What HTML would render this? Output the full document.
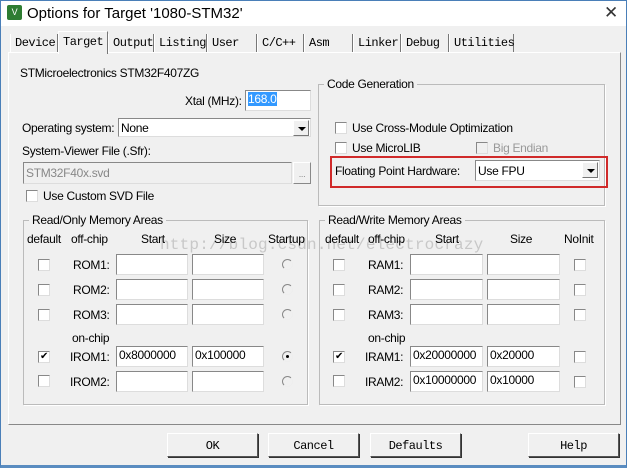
<!DOCTYPE html>
<html><head><meta charset="utf-8"><style>
*{box-sizing:border-box;margin:0;padding:0}
body{width:627px;height:468px;overflow:hidden;background:#f0f0f0;font-family:"Liberation Sans",Arial,sans-serif;font-size:12px;color:#000;position:relative;letter-spacing:-0.3px}
.a{position:absolute;white-space:nowrap}
.win{position:absolute;left:0;top:0;width:627px;height:468px;border:1px solid #4a7fb8;border-bottom:3px solid #5a8cc0}
.title{position:absolute;left:1px;top:1px;width:625px;height:25px;background:#fff}
.mono{font-family:"Liberation Mono",monospace;font-size:12px;letter-spacing:-0.5px}
.tab{position:absolute;top:34px;height:19px;border-left:1px solid #fff;border-right:1px solid #777;padding:2px 0 0 4px}
.panel{position:absolute;left:8px;top:52px;width:613px;height:373px;border:1px solid;border-color:#fff #888 #888 #fff}
.grp{position:absolute;border:1px solid #bbb;box-shadow:1px 1px 0 #fff}
.gl{position:absolute;background:#f0f0f0;padding:0 3px;top:-8px;left:5px}
.inp{position:absolute;background:#fff;border:1px solid;border-color:#888 #ddd #ddd #888;height:21px;padding:1px 2px;font-size:12px}
.cb{position:absolute;width:12px;height:12px;background:#fff;border:1px solid;border-color:#888 #ddd #ddd #888}
.rd{position:absolute;width:11px;height:11px;border-radius:50%;border:1px solid;border-color:#888 #eee #eee #888;background:#f0f0f0}
.btn{position:absolute;top:433px;width:91px;height:24px;border:1px solid;border-color:#fff #555 #555 #fff;box-shadow:1px 1px 0 #333;text-align:center;padding-top:5px}
.dd{position:absolute;width:16px;height:16px;border:1px solid;border-color:#fff #777 #777 #fff;background:#f0f0f0}
.dd:after{content:"";position:absolute;left:4px;top:6px;border:4px solid transparent;border-top:4px solid #000;border-bottom:0}
</style></head><body>
<div class="win"></div>
<div class="title"></div>
<div class="a" style="left:7px;top:5px;width:15px;height:15px;background:#2e7d32;border-radius:2px;color:#fff;font-size:9px;text-align:center;line-height:15px">V</div>
<div class="a" style="left:27px;top:5px;font-size:15px;letter-spacing:0">Options for Target '1080-STM32'</div>
<div class="a" style="left:604px;top:3px;font-size:17px;color:#333">✕</div>

<div class="tab mono" style="left:10px;width:48px">Device</div>
<div class="tab mono" style="left:108px;width:46px">Output</div>
<div class="tab mono" style="left:154px;width:53px">Listing</div>
<div class="tab mono" style="left:207px;width:50px">User</div>
<div class="tab mono" style="left:257px;width:47px">C/C++</div>
<div class="tab mono" style="left:304px;width:49px">Asm</div>
<div class="tab mono" style="left:353px;width:48px">Linker</div>
<div class="tab mono" style="left:401px;width:48px">Debug</div>
<div class="tab mono" style="left:449px;width:65px">Utilities</div>
<div class="panel"></div>
<div class="tab mono" style="left:58px;top:31px;height:23px;width:50px;background:#f0f0f0;padding-top:3px;border-top:1px solid #fff">Target</div>

<div class="a" style="left:20px;top:66px">STMicroelectronics STM32F407ZG</div>
<div class="a" style="left:185px;top:94px">Xtal (MHz):</div>
<div class="inp" style="left:245px;top:90px;width:66px"><span style="background:#3399ff;color:#fff">168.0</span></div>
<div class="a" style="left:22px;top:121px">Operating system:</div>
<div class="inp" style="left:118px;top:118px;width:193px;height:19px;padding-top:2px">None</div>
<div class="dd" style="left:293px;top:120px"></div>
<div class="a" style="left:22px;top:144px">System-Viewer File (.Sfr):</div>
<div class="inp" style="left:23px;top:162px;width:269px;height:22px;background:#f0f0f0;color:#888;padding-top:3px">STM32F40x.svd</div>
<div class="a" style="left:293px;top:162px;width:18px;height:22px;border:1px solid;border-color:#fff #888 #888 #fff;color:#888;font-size:9px;text-align:center;padding-top:6px">...</div>
<div class="cb" style="left:26px;top:190px"></div>
<div class="a" style="left:43px;top:189px">Use Custom SVD File</div>

<div class="grp" style="left:318px;top:84px;width:287px;height:122px"><div class="gl">Code Generation</div></div>
<div class="cb" style="left:335px;top:122px"></div>
<div class="a" style="left:352px;top:121px">Use Cross-Module Optimization</div>
<div class="cb" style="left:335px;top:142px"></div>
<div class="a" style="left:352px;top:141px">Use MicroLIB</div>
<div class="cb" style="left:476px;top:142px;background:#f0f0f0"></div>
<div class="a" style="left:493px;top:141px;color:#999">Big Endian</div>
<div class="a" style="left:330px;top:156px;width:278px;height:32px;border:2px solid #d02a2a"></div>
<div class="a" style="left:335px;top:164px">Floating Point Hardware:</div>
<div class="inp" style="left:475px;top:160px;width:125px;height:21px;padding-top:3px">Use FPU</div>
<div class="dd" style="left:582px;top:162px"></div>

<div class="grp" style="left:23px;top:220px;width:285px;height:185px"><div class="gl">Read/Only Memory Areas</div></div>
<div class="grp" style="left:319px;top:220px;width:286px;height:185px"><div class="gl">Read/Write Memory Areas</div></div>
<div class="a" style="left:160px;top:236px;font-family:'Liberation Mono',monospace;font-size:16px;color:#c8c8c8;letter-spacing:0.2px">http://blog.csdn.net/electrocrazy</div>

<div class="a" style="left:27px;top:232px">default</div>
<div class="a" style="left:71px;top:232px">off-chip</div>
<div class="a" style="left:141px;top:232px">Start</div>
<div class="a" style="left:214px;top:232px">Size</div>
<div class="a" style="left:268px;top:232px">Startup</div>
<div class="a" style="left:325px;top:232px">default</div>
<div class="a" style="left:368px;top:232px">off-chip</div>
<div class="a" style="left:435px;top:232px">Start</div>
<div class="a" style="left:510px;top:232px">Size</div>
<div class="a" style="left:564px;top:232px">NoInit</div>
<div class="a" style="left:72px;top:331px">on-chip</div>
<div class="a" style="left:368px;top:331px">on-chip</div>

<div class="cb" style="left:38px;top:259px"></div><div class="a" style="left:73px;top:258px">ROM1:</div>
<div class="inp" style="left:116px;top:254px;width:72px"></div><div class="inp" style="left:192px;top:254px;width:72px"></div><div class="rd" style="left:282px;top:259px"></div>
<div class="cb" style="left:38px;top:284px"></div><div class="a" style="left:73px;top:283px">ROM2:</div>
<div class="inp" style="left:116px;top:279px;width:72px"></div><div class="inp" style="left:192px;top:279px;width:72px"></div><div class="rd" style="left:282px;top:284px"></div>
<div class="cb" style="left:38px;top:309px"></div><div class="a" style="left:73px;top:308px">ROM3:</div>
<div class="inp" style="left:116px;top:304px;width:72px"></div><div class="inp" style="left:192px;top:304px;width:72px"></div><div class="rd" style="left:282px;top:309px"></div>
<div class="cb" style="left:38px;top:351px;font-size:10px;line-height:10px;text-align:center">✔</div><div class="a" style="left:70px;top:350px">IROM1:</div>
<div class="inp" style="left:116px;top:346px;width:72px">0x8000000</div><div class="inp" style="left:192px;top:346px;width:72px">0x100000</div><div class="rd" style="left:282px;top:351px"><div style="position:absolute;left:3px;top:3px;width:3px;height:3px;background:#000;border-radius:50%"></div></div>
<div class="cb" style="left:38px;top:375px"></div><div class="a" style="left:70px;top:375px">IROM2:</div>
<div class="inp" style="left:116px;top:371px;width:72px"></div><div class="inp" style="left:192px;top:371px;width:72px"></div><div class="rd" style="left:282px;top:376px"></div>

<div class="cb" style="left:333px;top:259px"></div><div class="a" style="left:368px;top:258px">RAM1:</div>
<div class="inp" style="left:410px;top:254px;width:73px"></div><div class="inp" style="left:487px;top:254px;width:73px"></div><div class="cb" style="left:574px;top:259px"></div>
<div class="cb" style="left:333px;top:284px"></div><div class="a" style="left:368px;top:283px">RAM2:</div>
<div class="inp" style="left:410px;top:279px;width:73px"></div><div class="inp" style="left:487px;top:279px;width:73px"></div><div class="cb" style="left:574px;top:284px"></div>
<div class="cb" style="left:333px;top:309px"></div><div class="a" style="left:368px;top:308px">RAM3:</div>
<div class="inp" style="left:410px;top:304px;width:73px"></div><div class="inp" style="left:487px;top:304px;width:73px"></div><div class="cb" style="left:574px;top:309px"></div>
<div class="cb" style="left:333px;top:351px;font-size:10px;line-height:10px;text-align:center">✔</div><div class="a" style="left:365px;top:350px">IRAM1:</div>
<div class="inp" style="left:410px;top:346px;width:73px">0x20000000</div><div class="inp" style="left:487px;top:346px;width:73px">0x20000</div><div class="cb" style="left:574px;top:351px"></div>
<div class="cb" style="left:333px;top:375px"></div><div class="a" style="left:365px;top:375px">IRAM2:</div>
<div class="inp" style="left:410px;top:371px;width:73px">0x10000000</div><div class="inp" style="left:487px;top:371px;width:73px">0x10000</div><div class="cb" style="left:574px;top:376px"></div>

<div class="btn mono" style="left:167px">OK</div>
<div class="btn mono" style="left:268px">Cancel</div>
<div class="btn mono" style="left:370px">Defaults</div>
<div class="btn mono" style="left:528px">Help</div>
</body></html>
